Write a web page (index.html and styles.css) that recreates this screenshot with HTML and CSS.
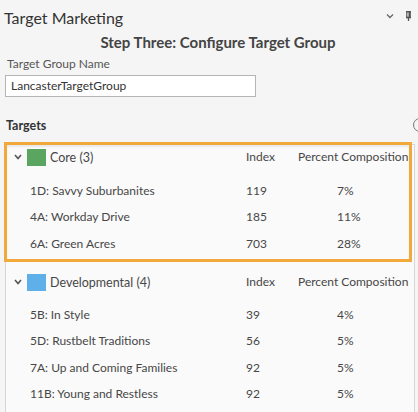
FILE: index.html
```html
<!DOCTYPE html>
<html>
<head>
<meta charset="utf-8">
<link rel="stylesheet" href="styles.css">
</head>
<body>
<div class="pane">
  <div class="titlebar">
    <span class="title">Target Marketing</span>
    <span class="tools">
      <svg class="ico" width="8" height="6" viewBox="0 0 8 6"><path d="M1 1.5 L4 4.5 L7 1.5" fill="none" stroke="#666" stroke-width="1.3"/></svg>
      <svg class="ico" width="7" height="10" viewBox="0 0 7 10"><path d="M1 0.7 H6 M1 6.5 H6 M3.5 6.5 V10" fill="none" stroke="#555" stroke-width="1.3"/><rect x="1.8" y="0.7" width="3.4" height="5.8" fill="none" stroke="#555" stroke-width="1.2"/><rect x="3.5" y="1" width="1.7" height="5.5" fill="#555"/></svg>
    </span>
  </div>
  <div class="step">Step Three: Configure Target Group</div>
  <div class="label">Target Group Name</div>
  <div class="input">LancasterTargetGroup</div>
  <div class="targets-row">
    <span class="targets">Targets</span>
    <span class="circle"></span>
  </div>
  <div class="list">
    <div class="group highlight">
      <div class="ghead">
        <div class="gname">
          <svg width="8" height="6" viewBox="0 0 8 6"><path d="M1 1 L4 4.5 L7 1" fill="none" stroke="#555" stroke-width="1.6"/></svg>
          <span class="swatch green"></span>
          <span>Core (3)</span>
        </div>
        <div class="hcol">Index</div>
        <div class="hcol">Percent Composition</div>
      </div>
      <div class="rows">
        <div class="row"><span>1D: Savvy Suburbanites</span><span>119</span><span class="pct">7%</span></div>
        <div class="row"><span>4A: Workday Drive</span><span>185</span><span class="pct">11%</span></div>
        <div class="row"><span>6A: Green Acres</span><span>703</span><span class="pct">28%</span></div>
      </div>
    </div>
    <div class="group plain">
      <div class="ghead">
        <div class="gname">
          <svg width="8" height="6" viewBox="0 0 8 6"><path d="M1 1 L4 4.5 L7 1" fill="none" stroke="#555" stroke-width="1.6"/></svg>
          <span class="swatch blue"></span>
          <span>Developmental (4)</span>
        </div>
        <div class="hcol">Index</div>
        <div class="hcol">Percent Composition</div>
      </div>
      <div class="rows">
        <div class="row"><span>5B: In Style</span><span>39</span><span class="pct">4%</span></div>
        <div class="row"><span>5D: Rustbelt Traditions</span><span>56</span><span class="pct">5%</span></div>
        <div class="row"><span>7A: Up and Coming Families</span><span>92</span><span class="pct">5%</span></div>
        <div class="row"><span>11B: Young and Restless</span><span>92</span><span class="pct">5%</span></div>
      </div>
    </div>
  </div>
</div>
</body>
</html>
```
FILE: styles.css
```css
html, body {
  margin: 0;
  padding: 0;
  background: #f5f5f5;
}
body {
  width: 418px;
  height: 412px;
  overflow: hidden;
  font-family: Lato, "Open Sans", sans-serif;
  color: #474747;
}
.pane {
  display: flex;
  flex-direction: column;
}
.titlebar {
  display: flex;
  justify-content: space-between;
  align-items: center;
  height: 34px;
  padding: 0 6px 0 4px;
}
.title {
  font-size: 16px;
  color: #333;
}
.tools {
  display: flex;
  align-items: center;
  gap: 11px;
  margin-bottom: 3px;
}
.step {
  text-align: center;
  font-weight: 700;
  font-size: 15px;
  color: #444;
  height: 20px;
  line-height: 17px;
  padding-left: 18px;
}
.label {
  font-size: 12px;
  color: #555;
  padding-left: 7px;
  margin-top: 2px;
  height: 19px;
}
.input {
  margin-left: 5px;
  width: 244px;
  height: 20px;
  border: 1px solid #b5b5b5;
  background: #fff;
  font-size: 12px;
  color: #333;
  line-height: 20px;
  padding-left: 5px;
}
.targets-row {
  display: flex;
  justify-content: space-between;
  align-items: center;
  margin-top: 20px;
  padding-left: 6px;
  height: 16px;
}
.targets {
  font-size: 12.5px;
  font-weight: 700;
  color: #333;
}
.circle {
  width: 12px;
  height: 12px;
  border: 1.3px solid #777;
  border-radius: 50%;
  margin-right: -9px;
}
.list {
  margin: 11px 0 0 5px;
  width: 408px;
  height: 270px;
  border: 1px solid #d6d6d6;
  background: #fafafa;
}
.group.highlight {
  border: 3px solid #f2a93b;
  margin: -3px 2px 0 -2px;
  padding-bottom: 2.6px;
  box-shadow: inset 0 2px 2px rgba(0,0,0,0.07);
}
.group.plain {
  margin-top: 8.5px;
}
.ghead, .row {
  display: grid;
  font-size: 12px;
}
.ghead {
  height: 24px;
  align-items: center;
  padding-left: 7px;
  grid-template-columns: 232px 52px 1fr;
}
.plain .ghead {
  padding-left: 8px;
}
.gname {
  display: flex;
  align-items: center;
  gap: 4px;
}
.gname span:last-child {
  font-size: 12.5px;
}
.gname svg {
  margin-right: 1px;
}
.swatch {
  width: 19px;
  height: 17px;
  display: inline-block;
}
.green { background: #5aa660; }
.blue { background: #5fb0e8; }
.hcol {
  white-space: nowrap;
  margin-top: -2px;
}
.rows {
  margin-top: 8.5px;
}
.plain .rows {
  margin-top: 7px;
}
.row {
  height: 26.3px;
  align-items: center;
  padding-left: 23px;
  grid-template-columns: 216px 52px 1fr;
}
.plain .row {
  padding-left: 24px;
}
.pct {
  padding-left: 39px;
}
```
